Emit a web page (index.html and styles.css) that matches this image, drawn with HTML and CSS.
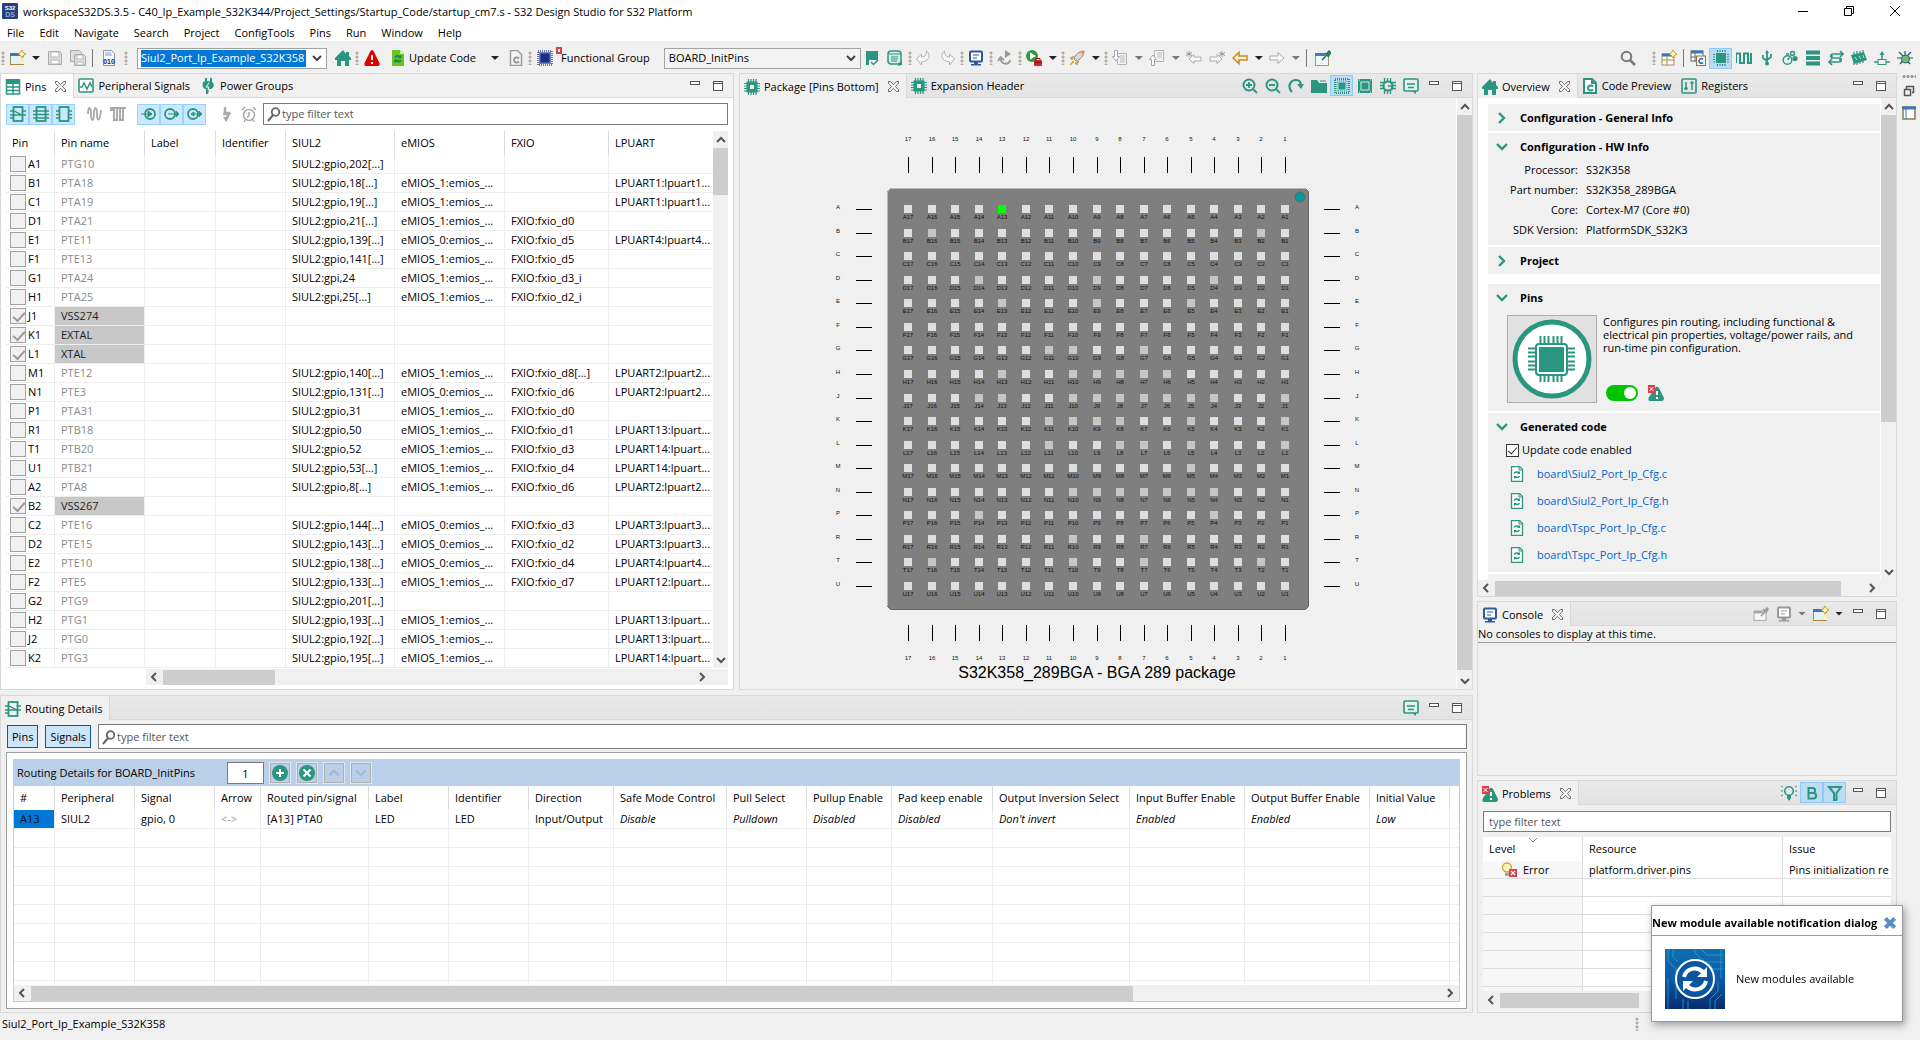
FILE: index.html
```html
<!DOCTYPE html>
<html lang="en">
<head>
  <meta charset="UTF-8">
  <title>S32 Design Studio for S32 Platform</title>
  <link rel="stylesheet" href="styles.css">
</head>
<body>
  <!-- Icons -->
  <svg class="sprite">
    <symbol id="home" viewBox="0 0 16 16"><path d="M8 0 0 8v2h2v6h4v-5h4v5h4v-6h2V8l-2-2V2h-3v2z" fill="#2b967f"/></symbol>
    <symbol id="newwin" viewBox="0 0 16 16"><rect x=".5" y="3.500" width="13" height="11" fill="#e4f3fc" stroke="#a58a3c"/><rect x="0" y="3" width="11" height="3" fill="#3b78b8"/><path d="M3 14c6 0 8-3 9-7l2 0v7z" fill="#fbeeb4"/><path d="M12 0l1.500 2.500L16 4l-2.500 1.500L12 8l-1.500-2.500L8 4l2.500-1.500z" fill="#fff3b0" stroke="#b98b12" stroke-width=".8"/></symbol>
    <symbol id="save" viewBox="0 0 16 16"><path d="M1.500 1.500h11l2 2v11h-13z" fill="#dedede" stroke="#a9a9a9"/><rect x="4" y="2" width="8" height="5" fill="#fff" stroke="#b5b5b5"/><rect x="4" y="10" width="8" height="4" fill="#fff" stroke="#b5b5b5"/></symbol>
    <symbol id="saveall" viewBox="0 0 16 16"><path d="M.5.5h9l2 2v9H.5z" fill="#dedede" stroke="#a9a9a9"/><path d="M4.500 4.500h9l2 2v9h-11z" fill="#dedede" stroke="#a9a9a9"/><rect x="7" y="5" width="6" height="4" fill="#fff" stroke="#b5b5b5"/><rect x="7" y="12" width="6" height="3" fill="#fff" stroke="#b5b5b5"/></symbol>
    <symbol id="warn" viewBox="0 0 16 16"><path d="M8 0c1 0 1.500 1 2 2l5.500 11c.5 1.500 0 3-1.500 3H2c-1.500 0-2-1.500-1.500-3L6 2c.5-1 1-2 2-2z" fill="#e00000"/><path d="M8 5v5M8 12v2" stroke="#fff" stroke-width="2"/></symbol>
    <symbol id="update" viewBox="0 0 16 16"><path d="M2 0h8l4 4v12H2z" fill="#6cc21e"/><path d="M10 0v4h4" fill="#cdebb0"/><path d="M5 7.500c1-2 4-2 6 0M11 10c-1 2-4 2-6 0" stroke="#0d8a55" stroke-width="2" fill="none"/><path d="M11 5v3H8M5 13v-3h3" stroke="#0d8a55" fill="none"/></symbol>
    <symbol id="cgray" viewBox="0 0 16 16"><path d="M2.500.5h7l4 4v11h-11z" fill="#f3f3f3" stroke="#9b9b9b" stroke-width="1.500"/><path d="M11 8.500c-2-2-5-1-5 1.500s3 3.500 5 1.500" stroke="#999" stroke-width="2" fill="none"/></symbol>
    <symbol id="cgreen" viewBox="0 0 16 16"><path d="M2 1h8l4 4v10H2z" fill="#fff" stroke="#2b967f" stroke-width="2"/><path d="M9 1v5h5z" fill="#2b967f"/><path d="M11 8.500c-2-2-5-1-5 1.500s3 3.500 5 1.500" stroke="#2b967f" stroke-width="2" fill="none"/></symbol>
    <symbol id="bluechip" viewBox="0 0 16 16"><rect x="1" y="1" width="14" height="14" fill="none" stroke="#6c78b4" stroke-width="2" stroke-dasharray="1 1"/><rect x="2" y="2" width="12" height="12" fill="#7380bd"/><rect x="3.500" y="3.500" width="9" height="9" fill="#1b2f86"/></symbol>
    <symbol id="chip" viewBox="0 0 16 16"><path d="M4.500 0v16M7 0v16M9.500 0v16M12 0v16M0 4.500h16M0 7h16M0 9.500h16M0 12h16" stroke="#2b967f" stroke-width="1.200"/><rect x="2.500" y="2.500" width="11" height="11" fill="#2b967f"/><rect x="6" y="6" width="4" height="4" fill="#e8f4f1"/></symbol>
    <symbol id="chipfull" viewBox="0 0 16 16"><path d="M4.500 0v16M7 0v16M9.500 0v16M12 0v16M0 4.500h16M0 7h16M0 9.500h16M0 12h16" stroke="#2b967f" stroke-width="1.200"/><rect x="2" y="2" width="12" height="12" fill="#bcd9ee"/><rect x="3" y="3" width="10" height="10" fill="#2b967f"/></symbol>
    <symbol id="flag" viewBox="0 0 16 16"><path d="M2 1h12v9H5v5H2z" fill="#2b967f"/><path d="M7 12l2.500 2.500L14 10" stroke="#2b967f" stroke-width="1.500" fill="none"/></symbol>
    <symbol id="dbedit" viewBox="0 0 16 16"><rect x="1" y="1" width="13" height="13" rx="3" fill="#d5ece6" stroke="#2b967f" stroke-width="1.500"/><path d="M2 4h11M4 7h7M4 9h7M4 11h6" stroke="#2b967f" stroke-width="1.200"/><path d="M10 16l5-5v4z" fill="#2b967f"/></symbol>
    <symbol id="undo" viewBox="0 0 16 16"><path d="M.5 9l5-5v3c4 0 5-3 5-6 4 3 4 10-5 11v3z" fill="#f8f8f8" stroke="#b0b0b0"/></symbol>
    <symbol id="monitor" viewBox="0 0 16 16"><rect x="2" y="1.500" width="12" height="10" rx="1" fill="#fff" stroke="#2d5a9e" stroke-width="2"/><path d="M5 5h6M5 8h4" stroke="#2d5a9e"/><path d="M6 12h4v2h3v1.500H3V14h3z" fill="#2d5a9e"/></symbol>
    <symbol id="monitorgray" viewBox="0 0 16 16"><rect x="2" y="1.500" width="12" height="10" rx="1" fill="#fff" stroke="#999" stroke-width="2"/><path d="M5 5h6M5 8h4" stroke="#999"/><path d="M6 12h4v2h3v1.500H3V14h3z" fill="#999"/></symbol>
    <symbol id="rerun" viewBox="0 0 16 16"><path d="M8 0l6 4-6 4z" fill="#8f9c91"/><path d="M4 9c-1 5 8 7 9 1M1 11l2.500-4L7 10" stroke="#999" stroke-width="1.800" fill="none"/></symbol>
    <symbol id="run" viewBox="0 0 16 16"><circle cx="6" cy="6" r="6" fill="#2f9a3c"/><path d="M4 2.500l6 3.500-6 3.500z" fill="#fff"/><rect x="8" y="10" width="8" height="6" rx="1" fill="#d3232a"/><path d="M10 10V8.500h4V10M8 12.500h8" stroke="#8c1217" fill="none"/></symbol>
    <symbol id="rocket" viewBox="0 0 16 16"><path d="M15 1c-5 0-9 4-10 8l2 2c4-1 8-5 8-10z" fill="#d8d8dc" stroke="#888"/><path d="M15 1l-4 1 3 3z" fill="#f0a030"/><path d="M5 6L1 8l2 2zM10 11l-2 4-2-2zM4 11l-3 4 4-3z" fill="#f0a030" stroke="#c57a18" stroke-width=".5"/></symbol>
    <symbol id="next" viewBox="0 0 16 16"><path d="M5.500 3.500h9v11h-9z" fill="#f4f4f4" stroke="#b4b4b4"/><path d="M8 6h5M8 8h5M8 10h5M8 12h5" stroke="#bbb"/><path d="M2.500.5h3v6h2L4 11 .5 6.500h2z" fill="#fff" stroke="#a4a4a4"/></symbol>
    <symbol id="prev" viewBox="0 0 16 16"><path d="M5.500.5h9v11h-9z" fill="#f4f4f4" stroke="#b4b4b4"/><path d="M8 3h5M8 5h5M8 7h5" stroke="#bbb"/><path d="M2.500 15.500h3v-6h2L4 5 .5 9.500h2z" fill="#fff" stroke="#a4a4a4"/></symbol>
    <symbol id="lastedit" viewBox="0 0 16 16"><path d="M3 9l5-4.500V7h7v4H8v2.500z" fill="#fafafa" stroke="#aaa"/><path d="M3 1v6M0 2.500l6 3M6 2.500l-6 3" stroke="#999"/></symbol>
    <symbol id="back" viewBox="0 0 16 16"><path d="M1 8l6-5.500V6h8v4H7v3.500z" fill="#fff3cf" stroke="#c68a1b" stroke-width="1.500"/></symbol>
    <symbol id="forward" viewBox="0 0 16 16"><path d="M15 8L9 2.500V6H1v4h8v3.500z" fill="#fafafa" stroke="#aaa"/></symbol>
    <symbol id="pinwin" viewBox="0 0 16 16"><rect x=".5" y="3.500" width="13" height="12" fill="#f1f8fc" stroke="#a99a55"/><path d="M0 4.500h10" stroke="#3f7fbe" stroke-width="3"/><path d="M7 10l4-4M10 3l4 4M11 5l3-4 2 2-3 3z" stroke="#22775a" stroke-width="1.500" fill="#2f9a6c"/></symbol>
    <symbol id="pingray" viewBox="0 0 16 16"><rect x="1" y="5.500" width="12" height="9" fill="#f6f6f6" stroke="#aaa"/><path d="M1 6h9" stroke="#aaa" stroke-width="3"/><path d="M8 10l4-4M10 3l4 4M12 5l2-3 1 1-2 3z" stroke="#999" stroke-width="1.500"/></symbol>
    <symbol id="search" viewBox="0 0 16 16"><circle cx="6.500" cy="6.500" r="4.800" fill="none" stroke="#777" stroke-width="2"/><path d="M10 10l5 5" stroke="#777" stroke-width="2.500"/></symbol>
    <symbol id="find" viewBox="0 0 16 16"><circle cx="9.500" cy="6" r="3.800" fill="none" stroke="#666" stroke-width="1.800"/><path d="M7 9l-5 6" stroke="#666" stroke-width="2"/></symbol>
    <symbol id="openpersp" viewBox="0 0 16 16"><rect x="1" y="4" width="12" height="11" fill="#fffbe9" stroke="#a58a5c"/><path d="M1 5h11" stroke="#3b78b8" stroke-width="3"/><path d="M1 10h12M6 6v9" stroke="#a58a5c"/><path d="M12 0l1.500 2.500L16 4l-2.500 1.500L12 8l-1.500-2.500L8 4l2.500-1.500z" fill="#fff3b0" stroke="#b98b12" stroke-width=".8"/></symbol>
    <symbol id="cpersp" viewBox="0 0 16 16"><rect x="1" y="1" width="12" height="10" fill="#fff" stroke="#666"/><path d="M1 2h12" stroke="#3b78b8" stroke-width="3"/><path d="M5 3v9M1 7h5" stroke="#666"/><rect x="6.500" y="6" width="9" height="9.500" fill="#eef5fc" stroke="#94713a"/><path d="M13 9c-2-1-4 0-4 2s2 3 4 1.500" stroke="#2e6cb0" stroke-width="1.600" fill="none"/></symbol>
    <symbol id="wave" viewBox="0 0 16 16"><path d="M0 13V3.500h4V13h4V3.500h4V13h3V3" stroke="#2b967f" stroke-width="2" fill="none"/></symbol>
    <symbol id="usb" viewBox="0 0 16 16"><path d="M8 2v11M4 5v3l4 3M12 4v3L8 10" stroke="#2b967f" stroke-width="1.800" fill="none"/><path d="M8 0l2 3H6z" fill="#2b967f"/><circle cx="8" cy="13.500" r="2" fill="#2b967f"/></symbol>
    <symbol id="clocks" viewBox="0 0 16 16"><circle cx="5.500" cy="10" r="4.300" fill="none" stroke="#2b967f" stroke-width="1.500"/><path d="M5.500 10l2-2.500M4 4h3" stroke="#2b967f" stroke-width="1.500"/><circle cx="10.500" cy="3.500" r="2" fill="none" stroke="#2b967f" stroke-width="1.500"/><circle cx="13" cy="8.500" r="2.600" fill="#2b967f"/></symbol>
    <symbol id="bars" viewBox="0 0 16 16"><path d="M1 2.500h14M1 8h14M1 13.500h14" stroke="#2b967f" stroke-width="4"/></symbol>
    <symbol id="swap" viewBox="0 0 16 16"><path d="M15 4H5c-3 0-3 4 0 4h6c3 0 3 4 0 4H1M12 1l3 3-3 3M4 15l-3-3 3-3M5 6H2M14 10h-3" stroke="#2b967f" stroke-width="1.600" fill="none"/></symbol>
    <symbol id="board" viewBox="0 0 16 16"><path d="M0 5l13-3 3 8-13 4z" fill="#2b967f"/><path d="M3 2v13M6 1v14M9 1v13M12 0v13" stroke="#2b967f" stroke-width="1.200"/><path d="M4 7l2 3M8 6l2 3M12 5l1 3" stroke="#bfe0d8"/></symbol>
    <symbol id="resistor" viewBox="0 0 16 16"><path d="M0 12h16M8 11V3" stroke="#2b967f" stroke-width="1.500"/><path d="M8 1l2.500 4h-5z" fill="#2b967f"/><rect x="4" y="9.500" width="8" height="5" fill="#f0f0f0" stroke="#2b967f"/></symbol>
    <symbol id="bug" viewBox="0 0 16 16"><path d="M8 8L2 2M8 8l6-6M8 8H0M8 8h8M8 8l-5 6M8 8l5 6M8 8V1" stroke="#245d59" stroke-width="1.200"/><circle cx="8.500" cy="9" r="4" fill="#7cb877" stroke="#236a73"/></symbol>
    <symbol id="tablei" viewBox="0 0 16 16"><path d="M1.500 1h13v14h-13zM1.500 8h13M1.500 11.500h13M8 4v11" stroke="#2b967f" stroke-width="1.500" fill="none"/><path d="M1 0h14v5H1z" fill="#2b967f"/></symbol>
    <symbol id="signal" viewBox="0 0 16 16"><rect x="1" y="1" width="14" height="13" rx="1" fill="#fff" stroke="#2b967f" stroke-width="1.600"/><path d="M2 9h2l2-4 3 6 3-6 2 4" stroke="#2b967f" stroke-width="1.500" fill="none"/></symbol>
    <symbol id="plug" viewBox="0 0 16 16"><path d="M3 4l4-1 5 1c3 2 2 6-1 7l-2 0-1 5H6v-5C3 11 2 8 3 4z" fill="#2b967f"/><path d="M6 5V0M11 5V0" stroke="#2b967f" stroke-width="2"/><path d="M9 5L6 9h3l-1 3" stroke="#fff" fill="none"/></symbol>
    <symbol id="close" viewBox="0 0 12 12"><path d="M.5.5h2L6 4l3.500-3.500h2v2L8 6l3.500 3.500v2h-2L6 8l-3.500 3.500h-2v-2L4 6 .5 2.500z" fill="#fff" stroke="#555"/></symbol>
    <symbol id="mini" viewBox="0 0 16 16"><rect x="3.500" y="3.500" width="9" height="3" fill="#fff" stroke="#555"/></symbol>
    <symbol id="maxi" viewBox="0 0 16 16"><rect x="3.500" y="3.500" width="9" height="9" fill="#fff" stroke="#555"/><path d="M3 5.500h10" stroke="#555"/></symbol>
    <symbol id="route" viewBox="0 0 16 16"><rect x="3.500" y="1" width="9" height="14" fill="none" stroke="#2b967f" stroke-width="1.800"/><path d="M0 5h4l8 4h4M0 9h16M0 12h4M12 5h4" stroke="#2b967f" stroke-width="1.300" fill="none"/></symbol>
    <symbol id="routeh" viewBox="0 0 16 16"><rect x="3.500" y="1" width="9" height="14" fill="none" stroke="#2b967f" stroke-width="1.800"/><path d="M0 5h16M0 8.500h16M0 12h16" stroke="#2b967f" stroke-width="1.300"/></symbol>
    <symbol id="routen" viewBox="0 0 16 16"><rect x="3.500" y="1" width="9" height="14" fill="none" stroke="#2b967f" stroke-width="1.800"/><path d="M0 5h3M0 8.500h3M0 12h3M13 5h3M13 8.500h3M13 12h3" stroke="#2b967f" stroke-width="1.500"/></symbol>
    <symbol id="sine" viewBox="0 0 16 16"><path d="M1 8C1 0 4 0 4 8s3 8 3 0 3-8 3 0 3 8 4-4" stroke="#aaa" stroke-width="1.800" fill="none"/></symbol>
    <symbol id="square" viewBox="0 0 16 16"><path d="M0 2h4v12h3V2h3v12h3V2h3M0 4h3M5 2h2M10 2h3" stroke="#aaa" stroke-width="2" fill="none"/></symbol>
    <symbol id="inp" viewBox="0 0 16 16"><circle cx="9" cy="8" r="5" fill="none" stroke="#2b967f" stroke-width="1.800"/><path d="M0 8h9M7 5l4 3-4 3z" stroke="#2b967f" fill="#2b967f"/></symbol>
    <symbol id="outp" viewBox="0 0 16 16"><circle cx="6" cy="8" r="5" fill="none" stroke="#2b967f" stroke-width="1.800"/><path d="M4 8h9M12 5l3 3-3 3z" stroke="#2b967f" fill="#2b967f"/></symbol>
    <symbol id="inout" viewBox="0 0 16 16"><circle cx="6" cy="8" r="5" fill="none" stroke="#2b967f" stroke-width="1.800"/><path d="M4 8h9M12 5l3 3-3 3zM7 6L4 8l3 2z" stroke="#2b967f" fill="#2b967f"/></symbol>
    <symbol id="bolt" viewBox="0 0 16 16"><path d="M7 1v6h5M5 8h6l-3 5" stroke="#aaa" stroke-width="2.500" fill="none"/><path d="M5 11l3 5 3-5z" fill="#aaa"/></symbol>
    <symbol id="alarm" viewBox="0 0 16 16"><circle cx="8" cy="9" r="5.500" fill="none" stroke="#aaa" stroke-width="1.500"/><path d="M8 6v3.500l-2 2M1 4l3-3M15 4l-3-3M4 14l-1 2M12 14l1 2" stroke="#aaa" stroke-width="1.500" fill="none"/></symbol>
    <symbol id="zoomin" viewBox="0 0 16 16"><circle cx="7" cy="7" r="5.500" fill="none" stroke="#2b967f" stroke-width="2"/><path d="M4 7h6M7 4v6M11 11l4 4" stroke="#2b967f" stroke-width="1.800"/></symbol>
    <symbol id="zoomout" viewBox="0 0 16 16"><circle cx="7" cy="7" r="5.500" fill="none" stroke="#2b967f" stroke-width="2"/><path d="M4 7h6M11 11l4 4" stroke="#2b967f" stroke-width="1.800"/></symbol>
    <symbol id="rotate" viewBox="0 0 16 16"><path d="M4 14C-1 9 2 2 8 2c4 0 5 3 5 6" stroke="#2b967f" stroke-width="2.200" fill="none"/><path d="M9 6h7l-3 5z" fill="#2b967f"/></symbol>
    <symbol id="folder" viewBox="0 0 16 16"><path d="M0 2h6l2 3h8v10H0z" fill="#2b967f"/><path d="M9 3h6" stroke="#2b967f"/></symbol>
    <symbol id="pkg" viewBox="0 0 16 16"><rect x="1" y="1" width="14" height="14" fill="none" stroke="#2b967f" stroke-width="2" stroke-dasharray="1 1"/><rect x="3" y="3" width="10" height="10" fill="none" stroke="#2b967f" stroke-dasharray="1 1"/><rect x="4.500" y="4.500" width="7" height="7" fill="#2b967f"/></symbol>
    <symbol id="pkg2" viewBox="0 0 16 16"><rect x="1" y="1" width="14" height="14" fill="#2b967f"/><rect x="4" y="4" width="8" height="8" fill="#2b967f" stroke="#d9e9e5"/><path d="M2 2h1M13 2h1M2 14h1M13 14h1" stroke="#fff"/></symbol>
    <symbol id="gchip" viewBox="0 0 16 16"><path d="M4.500 0v16M7.500 0v16M10.500 0v16M0 4.500h16M0 7.500h16M0 10.500h16" stroke="#2b967f" stroke-width="1.300"/><circle cx="8" cy="8" r="4.500" fill="#e6e6e6" stroke="#2b967f" stroke-width="2"/><path d="M8 8h4v4" stroke="#2b967f" stroke-width="1.500" fill="none"/></symbol>
    <symbol id="note" viewBox="0 0 16 16"><rect x="1" y="1" width="14" height="12" rx="1" fill="#e3f1ee" stroke="#2b967f" stroke-width="1.600"/><path d="M4 6h8M5 9.500h6" stroke="#2b967f" stroke-width="1.600"/><path d="M9 13h4v3z" fill="#2b967f"/></symbol>
    <symbol id="registers" viewBox="0 0 16 16"><rect x="1" y="1" width="14" height="14" rx="1" fill="none" stroke="#2b967f" stroke-width="1.600"/><path d="M5 4v5M11 7v5" stroke="#2b967f" stroke-width="1.500"/><circle cx="5" cy="10.500" r="1.700" fill="#2b967f"/><circle cx="11" cy="5" r="1.700" fill="#2b967f"/></symbol>
    <symbol id="problem" viewBox="0 0 16 16"><path d="M8 2c2-1 3 1 4 3l4 8c0 2-1 3-2 3H2c-2 0-2-2-1-4z" fill="#2b967f"/><path d="M9 6v4M9 12v2" stroke="#fff" stroke-width="2"/><rect width="7" height="8" fill="#d9404c"/><path d="M1.500 2l4 4M5.500 2l-4 4" stroke="#fff"/></symbol>
    <symbol id="bulb" viewBox="0 0 16 16"><circle cx="8" cy="6" r="4.300" fill="none" stroke="#2b967f" stroke-width="1.600"/><path d="M6 10h4v3l-2 3-2-3z" fill="#2b967f"/><path d="M0 1l2 1M0 6h2M0 11l2-1M16 1l-2 1M16 6h-2M16 11l-2-1" stroke="#2b967f"/></symbol>
    <symbol id="bold" viewBox="0 0 16 16"><path d="M4.500 3h4c3.500 0 3.500 5 0 5h-4zM4.500 8h5c3.500 0 3.500 5.500 0 5.500h-5z" fill="none" stroke="#2b967f" stroke-width="2"/></symbol>
    <symbol id="funnel" viewBox="0 0 16 16"><path d="M2 2h12L9.500 8v7H7V8z" fill="none" stroke="#2b967f" stroke-width="2"/></symbol>
    <symbol id="errbulb" viewBox="0 0 16 16"><circle cx="6" cy="5.500" r="4.500" fill="#fff3c4" stroke="#e0a030" stroke-width="1.300"/><path d="M4 11h4v3H4z" fill="#9aa6b8"/><rect x="8" y="7" width="8" height="8" fill="#d9404c"/><path d="M10 9l4 4M14 9l-4 4" stroke="#fff" stroke-width="1.200"/></symbol>
    <symbol id="genfile" viewBox="0 0 16 16"><path d="M2.500.5h8l3 3v12h-11z" fill="#fff" stroke="#2b967f" stroke-width="1.300"/><path d="M10 0v4h4" fill="none" stroke="#2b967f"/><path d="M5 7.500c1-2 4-2 5.500-.5M10.500 10c-1 2-4 2-5.500.5" stroke="#2b967f" stroke-width="1.500" fill="none"/><path d="M11 5v3H8zM5 13v-3h3z" fill="#2b967f"/></symbol>
    <symbol id="chevr" viewBox="0 0 12 12"><path d="M3 1l5 5-5 5" stroke="#2b967f" stroke-width="2.400" fill="none"/></symbol>
    <symbol id="chevd" viewBox="0 0 12 12"><path d="M1 3l5 5 5-5" stroke="#2b967f" stroke-width="2.400" fill="none"/></symbol>
    <symbol id="up" viewBox="0 0 12 12"><path d="M2 8l4-4 4 4" stroke="currentColor" stroke-width="2" fill="none"/></symbol>
    <symbol id="down" viewBox="0 0 12 12"><path d="M2 4l4 4 4-4" stroke="currentColor" stroke-width="2" fill="none"/></symbol>
    <symbol id="left" viewBox="0 0 12 12"><path d="M8 2L4 6l4 4" stroke="currentColor" stroke-width="2" fill="none"/></symbol>
    <symbol id="right" viewBox="0 0 12 12"><path d="M4 2l4 4-4 4" stroke="currentColor" stroke-width="2" fill="none"/></symbol>
    <symbol id="add" viewBox="0 0 18 18"><circle cx="9" cy="9" r="8" fill="#2b967f"/><path d="M9 5v8M5 9h8" stroke="#fff" stroke-width="2"/></symbol>
    <symbol id="del" viewBox="0 0 18 18"><circle cx="9" cy="9" r="8" fill="#2b967f"/><path d="M5.500 5.500l7 7M12.500 5.500l-7 7" stroke="#fff" stroke-width="2"/></symbol>
    <symbol id="restore" viewBox="0 0 16 16"><path d="M5.500 6V3.500h7v6H11M3.500 6.500h6v6h-6z" fill="none" stroke="#555" stroke-width="1.500"/></symbol>
    <symbol id="layout" viewBox="0 0 16 16"><rect x="2" y="2" width="12" height="12" fill="#fff" stroke="#8c7a4c" stroke-width="1.500"/><path d="M1 3h14" stroke="#3b78b8" stroke-width="3"/><path d="M5 4v10" stroke="#3b78b8"/></symbol>
  </svg>

  <header>
    <div class="titlebar">
      <svg class="i logo" viewBox="0 0 16 16"><rect width="16" height="16" rx="1" fill="#24407c"/><text x="8" y="7" font-size="6" text-anchor="middle" fill="#fff">S32</text><text x="8" y="14" font-size="7" text-anchor="middle" fill="#8fa6d8">DS</text></svg>
      <span class="title">workspaceS32DS.3.5 - C40_Ip_Example_S32K344/Project_Settings/Startup_Code/startup_cm7.s - S32 Design Studio for S32 Platform</span>
      <button class="win" aria-label="Minimize"><svg class="i"><path d="M3 8.500h10" stroke="#000"/></svg></button>
      <button class="win" aria-label="Restore"><svg class="i"><path d="M5.500 5.500v-2h7v7h-2M3.500 5.500h7v7h-7z" stroke="#000" fill="none"/></svg></button>
      <button class="win" aria-label="Close"><svg class="i"><path d="M3 3l10 10M13 3L3 13" stroke="#000"/></svg></button>
    </div>
    <nav class="menubar">
      <a href="#">File</a><a href="#">Edit</a><a href="#">Navigate</a><a href="#">Search</a><a href="#">Project</a><a href="#">ConfigTools</a><a href="#">Pins</a><a href="#">Run</a><a href="#">Window</a><a href="#">Help</a>
    </nav>
    <div class="toolbar">
      <i class="dots"></i>
      <button class="tool" aria-label="New"><svg class="i"><use href="#newwin"/></svg></button><i class="caret"></i>
      <button class="tool" aria-label="Save"><svg class="i"><use href="#save"/></svg></button>
      <button class="tool" aria-label="Save all"><svg class="i"><use href="#saveall"/></svg></button>
      <i class="sep"></i>
      <button class="tool wide" aria-label="Build"><svg class="i logo" viewBox="0 0 16 16"><path d="M2.500.5h8l3 3v12h-11z" fill="#f4f9ff" stroke="#8b94a8"/><path d="M4 3h6M4 5h7" stroke="#7ca0d0"/><text x="8" y="14" font-size="7" text-anchor="middle" fill="#222b66">010</text></svg></button>
      <i class="dots"></i>
      <span class="combo project"><select aria-label="Project"><option>Siul2_Port_Ip_Example_S32K358</option></select><svg><use href="#down"/></svg></span>
      <button class="tool" aria-label="Home"><svg class="i"><use href="#home"/></svg></button>
      <i class="dots"></i>
      <button class="tool" aria-label="Problems"><svg class="i"><use href="#warn"/></svg></button>
      <button class="tool text"><svg class="i"><use href="#update"/></svg>Update Code</button><i class="caret wide"></i>
      <button class="tool" aria-label="Preview"><svg class="i"><use href="#cgray"/></svg></button>
      <i class="dots"></i>
      <button class="tool" aria-label="Processor"><svg class="i"><use href="#bluechip"/></svg></button>
      <label class="group" for="fgroup"><i class="errmark"></i>Functional Group</label>
      <span class="combo init"><select id="fgroup"><option>BOARD_InitPins</option></select><svg><use href="#down"/></svg></span>
      <button class="tool" aria-label="Flag"><svg class="i"><use href="#flag"/></svg></button>
      <button class="tool" aria-label="Group properties"><svg class="i"><use href="#dbedit"/></svg></button>
      <i class="dots"></i>
      <button class="tool" aria-label="Undo"><svg class="i"><use href="#undo"/></svg></button>
      <button class="tool" aria-label="Redo"><svg class="i flip"><use href="#undo"/></svg></button>
      <i class="dots"></i>
      <button class="tool" aria-label="Console"><svg class="i"><use href="#monitor"/></svg></button>
      <i class="dots"></i>
      <button class="tool" aria-label="Rerun"><svg class="i"><use href="#rerun"/></svg></button>
      <i class="dots"></i>
      <button class="tool" aria-label="Run"><svg class="i"><use href="#run"/></svg></button><i class="caret"></i>
      <i class="dots"></i>
      <button class="tool" aria-label="Launch"><svg class="i"><use href="#rocket"/></svg></button><i class="caret"></i>
      <i class="dots"></i>
      <button class="tool" aria-label="Next"><svg class="i"><use href="#next"/></svg></button><i class="caret dim"></i>
      <button class="tool" aria-label="Previous"><svg class="i"><use href="#prev"/></svg></button><i class="caret dim"></i>
      <button class="tool" aria-label="Last edit"><svg class="i"><use href="#lastedit"/></svg></button>
      <button class="tool" aria-label="Next edit"><svg class="i flip"><use href="#lastedit"/></svg></button>
      <button class="tool" aria-label="Back"><svg class="i"><use href="#back"/></svg></button><i class="caret"></i>
      <button class="tool" aria-label="Forward"><svg class="i"><use href="#forward"/></svg></button><i class="caret dim"></i>
      <i class="sep"></i>
      <button class="tool wide" aria-label="Pin editor"><svg class="i"><use href="#pinwin"/></svg></button>
      <div class="perspectives">
        <button class="tool search" aria-label="Search"><svg class="i"><use href="#search"/></svg></button>
        <i class="dots"></i>
        <button class="tool" aria-label="Open perspective"><svg class="i"><use href="#openpersp"/></svg></button>
        <i class="sep"></i>
        <button class="tool" aria-label="C/C++"><svg class="i"><use href="#cpersp"/></svg></button>
        <button class="tool on" aria-label="Pins"><svg class="i"><use href="#chipfull"/></svg></button>
        <button class="tool" aria-label="Clocks"><svg class="i"><use href="#wave"/></svg></button>
        <button class="tool" aria-label="Peripherals"><svg class="i"><use href="#usb"/></svg></button>
        <button class="tool" aria-label="Timers"><svg class="i"><use href="#clocks"/></svg></button>
        <button class="tool" aria-label="Memory"><svg class="i"><use href="#bars"/></svg></button>
        <button class="tool" aria-label="DCD"><svg class="i"><use href="#swap"/></svg></button>
        <button class="tool" aria-label="IVT"><svg class="i"><use href="#board"/></svg></button>
        <button class="tool" aria-label="QuadSPI"><svg class="i"><use href="#resistor"/></svg></button>
        <button class="tool" aria-label="Debug"><svg class="i"><use href="#bug"/></svg></button>
      </div>
    </div>
  </header>

  <main>
    <div class="left">
      <div class="top">
        <section class="panel pins">
          <div class="tabs">
            <button class="tab active white"><svg class="i"><use href="#tablei"/></svg>Pins<svg class="x"><use href="#close"/></svg></button>
            <button class="tab"><svg class="i"><use href="#signal"/></svg>Peripheral Signals</button>
            <button class="tab"><svg class="i"><use href="#plug"/></svg>Power Groups</button>
            <div class="tabtools">
              <button class="tool" aria-label="Minimize"><svg class="i"><use href="#mini"/></svg></button>
              <button class="tool" aria-label="Maximize"><svg class="i"><use href="#maxi"/></svg></button>
            </div>
          </div>
          <div class="pintools">
            <button class="tool on" aria-label="Routed"><svg class="i"><use href="#route"/></svg></button>
            <button class="tool on" aria-label="All pins"><svg class="i"><use href="#routeh"/></svg></button>
            <button class="tool on" aria-label="Unrouted"><svg class="i"><use href="#routen"/></svg></button>
            <button class="tool after" aria-label="Analog"><svg class="i"><use href="#sine"/></svg></button>
            <button class="tool" aria-label="Digital"><svg class="i"><use href="#square"/></svg></button>
            <button class="tool on after" aria-label="Input"><svg class="i"><use href="#inp"/></svg></button>
            <button class="tool on" aria-label="Output"><svg class="i"><use href="#outp"/></svg></button>
            <button class="tool on" aria-label="Input and output"><svg class="i"><use href="#inout"/></svg></button>
            <button class="tool after" aria-label="Power"><svg class="i"><use href="#bolt"/></svg></button>
            <button class="tool" aria-label="Clock"><svg class="i"><use href="#alarm"/></svg></button>
            <label class="filter"><svg class="i"><use href="#find"/></svg><input type="text" placeholder="type filter text" aria-label="Filter pins"></label>
          </div>
          <div class="pinsview">
            <table class="grid pintable">
              <colgroup><col class="c49"><col class="c90"><col class="c71"><col class="c70"><col class="c109"><col class="c110"><col class="c104"><col></colgroup>
              <thead><tr><th>Pin</th><th>Pin name</th><th>Label</th><th>Identifier</th><th>SIUL2</th><th>eMIOS</th><th>FXIO</th><th>LPUART</th></tr></thead>
              <tbody id="pinrows"></tbody>
            </table>
            <div class="vscroll"><svg><use href="#up"/></svg><div class="thumb t47"></div><svg class="end"><use href="#down"/></svg></div>
          </div>
          <div class="hscroll inset"><svg><use href="#left"/></svg><div class="thumb w112"></div><svg class="end"><use href="#right"/></svg></div>
        </section>

        <section class="panel package">
          <div class="tabs">
            <button class="tab active"><svg class="i"><use href="#chip"/></svg>Package [Pins Bottom]<svg class="x"><use href="#close"/></svg></button>
            <button class="tab"><svg class="i"><use href="#chip"/></svg>Expansion Header</button>
            <div class="tabtools">
              <button class="tool" aria-label="Zoom in"><svg class="i"><use href="#zoomin"/></svg></button>
              <button class="tool" aria-label="Zoom out"><svg class="i"><use href="#zoomout"/></svg></button>
              <button class="tool" aria-label="Rotate"><svg class="i"><use href="#rotate"/></svg></button>
              <button class="tool" aria-label="Resources"><svg class="i"><use href="#folder"/></svg></button>
              <button class="tool on" aria-label="Bottom view"><svg class="i"><use href="#pkg"/></svg></button>
              <button class="tool" aria-label="Top view"><svg class="i"><use href="#pkg2"/></svg></button>
              <button class="tool" aria-label="Custom view"><svg class="i"><use href="#gchip"/></svg></button>
              <button class="tool" aria-label="Legend"><svg class="i"><use href="#note"/></svg></button>
              <button class="tool" aria-label="Minimize"><svg class="i"><use href="#mini"/></svg></button>
              <button class="tool" aria-label="Maximize"><svg class="i"><use href="#maxi"/></svg></button>
            </div>
          </div>
          <div class="canvas">
            <svg id="chipview" viewBox="0 -1 716 590" width="716" height="590"></svg>
            <div class="vscroll"><svg><use href="#up"/></svg><div class="thumb grow"></div><svg class="end"><use href="#down"/></svg></div>
          </div>
        </section>
      </div>

      <section class="panel routing">
        <div class="tabs">
          <button class="tab active"><svg class="i"><use href="#route"/></svg>Routing Details</button>
          <div class="tabtools">
            <button class="tool" aria-label="Legend"><svg class="i"><use href="#note"/></svg></button>
            <button class="tool" aria-label="Minimize"><svg class="i"><use href="#mini"/></svg></button>
            <button class="tool" aria-label="Maximize"><svg class="i"><use href="#maxi"/></svg></button>
          </div>
        </div>
        <div class="routetools">
          <button class="toggle">Pins</button>
          <button class="toggle">Signals</button>
          <label class="filter"><svg class="i"><use href="#find"/></svg><input type="text" placeholder="type filter text" aria-label="Filter routes"></label>
        </div>
        <div class="routebox">
          <div class="routeframe">
            <div class="routehead">
              <label for="count">Routing Details for BOARD_InitPins</label>
              <input id="count" type="text" value="1">
              <button aria-label="Add"><svg><use href="#add"/></svg></button>
              <button aria-label="Remove"><svg><use href="#del"/></svg></button>
              <button aria-label="Move up" disabled><svg><use href="#up"/></svg></button>
              <button aria-label="Move down" disabled><svg><use href="#down"/></svg></button>
            </div>
            <div class="routeclip">
              <table class="grid routetable">
                <colgroup><col class="c41"><col class="c80"><col class="c80"><col class="c46"><col class="c108"><col class="c80"><col class="c80"><col class="c85"><col class="c113"><col class="c80"><col class="c85"><col class="c101"><col class="c137"><col class="c115"><col class="c125"><col class="c80"><col></colgroup>
                <thead><tr><th>#</th><th>Peripheral</th><th>Signal</th><th>Arrow</th><th>Routed pin/signal</th><th>Label</th><th>Identifier</th><th>Direction</th><th>Safe Mode Control</th><th>Pull Select</th><th>Pullup Enable</th><th>Pad keep enable</th><th>Output Inversion Select</th><th>Input Buffer Enable</th><th>Output Buffer Enable</th><th>Initial Value</th><th></th></tr></thead>
                <tbody id="routerows">
                  <tr><td class="sel">A13</td><td>SIUL2</td><td>gpio, 0</td><td class="dim">&lt;-&gt;</td><td>[A13] PTA0</td><td>LED</td><td>LED</td><td>Input/Output</td><td><em>Disable</em></td><td><em>Pulldown</em></td><td><em>Disabled</em></td><td><em>Disabled</em></td><td><em>Don't invert</em></td><td><em>Enabled</em></td><td><em>Enabled</em></td><td><em>Low</em></td><td></td></tr>
                </tbody>
              </table>
            </div>
            <div class="hscroll"><svg><use href="#left"/></svg><div class="thumb w1102"></div><svg class="end"><use href="#right"/></svg></div>
          </div>
        </div>
      </section>
    </div>

    <div class="right">
      <section class="panel overview">
        <div class="tabs">
          <button class="tab active"><svg class="i"><use href="#home"/></svg>Overview<svg class="x"><use href="#close"/></svg></button>
          <button class="tab"><svg class="i"><use href="#cgreen"/></svg>Code Preview</button>
          <button class="tab"><svg class="i"><use href="#registers"/></svg>Registers</button>
          <div class="tabtools">
            <button class="tool" aria-label="Minimize"><svg class="i"><use href="#mini"/></svg></button>
            <button class="tool" aria-label="Maximize"><svg class="i"><use href="#maxi"/></svg></button>
          </div>
        </div>
        <div class="ovbody">
          <div class="cards">
            <div class="card"><h3><svg><use href="#chevr"/></svg>Configuration - General Info</h3></div>
            <div class="card hw">
              <h3><svg><use href="#chevd"/></svg>Configuration - HW Info</h3>
              <dl><dt>Processor:</dt><dd>S32K358</dd><dt>Part number:</dt><dd>S32K358_289BGA</dd><dt>Core:</dt><dd>Cortex-M7 (Core #0)</dd><dt>SDK Version:</dt><dd>PlatformSDK_S32K3</dd></dl>
            </div>
            <div class="card"><h3><svg><use href="#chevr"/></svg>Project</h3></div>
            <div class="card spaced">
              <h3><svg><use href="#chevd"/></svg>Pins</h3>
              <div class="pinsinfo">
                <button class="bigicon" aria-label="Pins tool">
                  <svg viewBox="0 0 80 80">
                    <circle cx="40" cy="40" r="37" fill="#fff" stroke="#2b967f" stroke-width="5"/>
                    <path d="M28.500 17v46M32.500 17v46M36.500 17v46M41.500 17v46M45.500 17v46M49.500 17v46M16 29.500h47M16 33.500h47M16 37.500h47M16 42.500h47M16 46.500h47M16 50.500h47" stroke="#2b967f" stroke-width="2"/>
                    <rect x="24" y="25" width="31" height="31" rx="3" fill="#fff" stroke="#2b967f" stroke-width="2"/>
                    <rect x="27" y="28" width="25" height="25" fill="#2b967f"/>
                  </svg>
                </button>
                <div>
                  <p>Configures pin routing, including functional &amp; electrical pin properties, voltage/power rails, and run-time pin configuration.</p>
                  <div class="status"><input class="switch" type="checkbox" checked aria-label="Enable pins tool"><svg class="i"><use href="#problem"/></svg></div>
                </div>
              </div>
            </div>
            <div class="card gen">
              <h3><svg><use href="#chevd"/></svg>Generated code</h3>
              <label class="check"><input type="checkbox" checked>Update code enabled</label>
              <a href="#"><svg class="i"><use href="#genfile"/></svg>board\Siul2_Port_Ip_Cfg.c</a>
              <a href="#"><svg class="i"><use href="#genfile"/></svg>board\Siul2_Port_Ip_Cfg.h</a>
              <a href="#"><svg class="i"><use href="#genfile"/></svg>board\Tspc_Port_Ip_Cfg.c</a>
              <a href="#"><svg class="i"><use href="#genfile"/></svg>board\Tspc_Port_Ip_Cfg.h</a>
            </div>
            <div class="card rest"></div>
          </div>
          <div class="vscroll"><svg><use href="#up"/></svg><div class="thumb t307"></div><svg class="end"><use href="#down"/></svg></div>
        </div>
        <div class="hscroll corner"><svg><use href="#left"/></svg><div class="thumb w346"></div><svg class="end"><use href="#right"/></svg></div>
      </section>

      <section class="panel console">
        <div class="tabs">
          <button class="tab active"><svg class="i"><use href="#monitor"/></svg>Console<svg class="x"><use href="#close"/></svg></button>
          <div class="tabtools">
            <button class="tool" aria-label="Pin console"><svg class="i"><use href="#pingray"/></svg></button>
            <button class="tool" aria-label="Display console"><svg class="i"><use href="#monitorgray"/></svg></button><i class="caret dim"></i>
            <button class="tool" aria-label="Open console"><svg class="i"><use href="#newwin"/></svg></button><i class="caret"></i>
            <button class="tool" aria-label="Minimize"><svg class="i"><use href="#mini"/></svg></button>
            <button class="tool" aria-label="Maximize"><svg class="i"><use href="#maxi"/></svg></button>
          </div>
        </div>
        <p>No consoles to display at this time.</p>
      </section>

      <section class="panel problems">
        <div class="tabs">
          <button class="tab active"><svg class="i"><use href="#problem"/></svg>Problems<svg class="x"><use href="#close"/></svg></button>
          <div class="tabtools">
            <button class="tool" aria-label="Hints"><svg class="i"><use href="#bulb"/></svg></button>
            <button class="tool on" aria-label="Bold"><svg class="i"><use href="#bold"/></svg></button>
            <button class="tool on" aria-label="Filter"><svg class="i"><use href="#funnel"/></svg></button>
            <button class="tool" aria-label="Minimize"><svg class="i"><use href="#mini"/></svg></button>
            <button class="tool" aria-label="Maximize"><svg class="i"><use href="#maxi"/></svg></button>
          </div>
        </div>
        <input class="pfilter" type="text" placeholder="type filter text" aria-label="Filter problems">
        <div class="probview">
          <table class="grid probtable">
            <colgroup><col class="c100"><col class="c200"><col></colgroup>
            <thead><tr><th><svg class="sort"><path d="M0 0l4 4 4-4" fill="none" stroke="#888"/></svg>Level</th><th>Resource</th><th>Issue</th></tr></thead>
            <tbody id="problemrows">
              <tr><td><span class="err"><svg class="i"><use href="#errbulb"/></svg>Error</span></td><td>platform.driver.pins</td><td>Pins initialization re</td></tr>
            </tbody>
          </table>
        </div>
        <div class="hscroll"><svg><use href="#left"/></svg><div class="thumb w139"></div><svg class="end"><use href="#right"/></svg></div>
      </section>
    </div>

    <aside class="strip">
      <i class="hdots"></i>
      <button class="tool" aria-label="Restore view"><svg class="i"><use href="#restore"/></svg></button>
      <button class="tool" aria-label="Outline"><svg class="i"><use href="#layout"/></svg></button>
    </aside>
  </main>

  <footer><span>Siul2_Port_Ip_Example_S32K358</span><i class="dots"></i></footer>

  <div class="popup" role="dialog" aria-label="New module available">
    <div class="popuphead"><b>New module available notification dialog</b><button aria-label="Close"><svg viewBox="0 0 12 12"><path d="M2 2l8 8M10 2l-8 8" stroke="#5b8cc4" stroke-width="3.500"/></svg></button></div>
    <div class="popupbody">
      <svg viewBox="0 0 60 60">
        <defs><linearGradient id="sky" x1="0" y1="0" x2="0" y2="1"><stop offset="0" stop-color="#0f6fae"/><stop offset=".5" stop-color="#0a5aa8"/><stop offset="1" stop-color="#062c6e"/></linearGradient></defs>
        <rect width="60" height="60" fill="url(#sky)"/>
        <path d="M3 0v12l8 8v30M8 0v8l5 5M30 0v4l10 9h18M36 0l6 6h16M58 20H48l-5-6M45 60V50l8-8v-9M50 60v-8l7-7M18 60V50M23 60v-8M3 60V30M56 0v30" stroke="#2e9ad6" stroke-width=".8" fill="none"/>
        <circle cx="30" cy="30" r="19" fill="#0a55a0" stroke="#fff" stroke-width="2"/>
        <path d="M19 28c2-9 13-11 19-5M41 32c-2 9-13 11-19 5" stroke="#fff" stroke-width="4" fill="none"/>
        <path d="M42 18v10H32zM18 42V32h10z" fill="#fff"/>
      </svg>
      <span>New modules available</span>
    </div>
  </div>

  <script src="script.js"></script>
</body>
</html>
```
FILE: styles.css
```css
* {
  box-sizing: border-box;
}

body {
  margin: 0;
  min-height: 100vh;
  display: flex;
  flex-direction: column;
  background: #f0f0f0;
  color: #000;
  font-family: "Open Sans", "Noto Sans", sans-serif;
  font-size: 11px;
  line-height: 16px;
  overflow: hidden;
}

button, input, select {
  font: inherit;
  color: inherit;
  margin: 0;
}

button {
  border: 0;
  background: none;
  padding: 0;
}

p, h3, dl, dd {
  margin: 0;
}

svg {
  flex: none;
  display: block;
}

.sprite {
  position: absolute;
  width: 0;
  height: 0;
}

.logo {
  font-family: "Liberation Sans", sans-serif;
  font-weight: bold;
  overflow: visible;
}

.i {
  width: 16px;
  height: 16px;
}

.flip {
  transform: scaleX(-1);
}

/* Title and menu */
.titlebar {
  display: flex;
  align-items: center;
  height: 22px;
  padding: 0 2px 0 2px;
  background: #fff;
}

.title {
  flex: 1;
  margin-left: 5px;
  padding-top: 2px;
  white-space: nowrap;
}

.win {
  width: 46px;
  display: flex;
  justify-content: center;
}

.menubar {
  display: flex;
  gap: 15px;
  height: 19px;
  padding-left: 7px;
  background: #fff;
  line-height: 22px;
}

.menubar a {
  color: #000;
  text-decoration: none;
}

/* Toolbar */
.toolbar {
  display: flex;
  align-items: center;
  height: 32px;
  padding-top: 2px;
}

.tool {
  flex: none;
  width: 23px;
  height: 21px;
  display: flex;
  align-items: center;
  justify-content: center;
}

.tool.wide {
  width: 28px;
}

.tool.on {
  background: #cce8ff;
  border: 1px solid #99d1ff;
}

.tool.text {
  width: auto;
  gap: 3px;
  padding-left: 7px;
  white-space: nowrap;
}

.dots {
  flex: none;
  width: 6px;
  height: 14px;
  background: radial-gradient(circle, #b5ad9f 1px, transparent 2px) 0 0 / 6px 4px;
}

.sep {
  flex: none;
  width: 1px;
  height: 18px;
  margin: 0 2px 0 3px;
  background: #777;
}

.caret {
  flex: none;
  width: 14px;
  height: 4px;
  background: #222;
  clip-path: polygon(3px 0, 11px 0, 7px 4px);
}

.caret.dim {
  background: #777;
}

.caret.wide {
  margin: 0 2px 0 12px;
}

.combo {
  position: relative;
  flex: none;
  height: 21px;
}

.combo select {
  width: 100%;
  height: 100%;
  appearance: none;
  border: 1px solid #a3a3a3;
  border-radius: 0;
  background: #fff;
}

.combo svg {
  position: absolute;
  right: 4px;
  top: 4px;
  width: 12px;
  height: 12px;
  color: #444;
}

.project {
  width: 190px;
  margin: 0 4px 0 8px;
}

.project select {
  padding: 1px 20px 1px 3px;
  color: #fff;
  background: linear-gradient(#0078d7, #0078d7) content-box, #fff;
}

.project select option {
  color: #000;
}

.group {
  position: relative;
  margin: 0 14px 0 5px;
  white-space: nowrap;
}

.errmark {
  position: absolute;
  left: -5px;
  top: -3px;
  width: 6px;
  height: 7px;
  border: 2px solid #d9404c;
  background: #fff;
}

.init {
  width: 197px;
}

.init select {
  padding: 0 4px;
  background: #f3f3f3;
}

.perspectives {
  display: flex;
  align-items: center;
  margin-left: auto;
  padding-right: 4px;
}

.perspectives .search {
  margin-right: 12px;
}

.perspectives .on, .tabtools .on {
  background: #bcdcf4;
  border-color: #90c8f6;
}

/* Workbench */
main {
  flex: 1;
  display: flex;
  gap: 4px;
}

.left {
  flex: 1;
  min-width: 0;
  display: flex;
  flex-direction: column;
  gap: 5px;
}

.top {
  display: flex;
  gap: 5px;
}

.right {
  width: 420px;
  display: flex;
  flex-direction: column;
  gap: 4px;
}

.strip {
  width: 23px;
  display: flex;
  flex-direction: column;
  align-items: center;
  padding-top: 2px;
  margin-left: -4px;
}

.strip .tool {
  margin-bottom: 1px;
}

.hdots {
  width: 14px;
  height: 3px;
  margin-bottom: 2px;
  background: radial-gradient(circle, #9d968a 1px, transparent 2px) 0 0 / 4px 3px;
}

.panel {
  min-width: 0;
  display: flex;
  flex-direction: column;
  border: 1px solid #d8d8d8;
}

.pins, .package {
  flex: 1;
}

.pins {
  background: #fff;
}

.tabs {
  display: flex;
  height: 24px;
  border-bottom: 1px solid #d8d8d8;
  background: linear-gradient(#e9e9e9, #e3e3e3);
}

.pins .tabs {
  background: #f0f0f0;
}

.tab {
  display: flex;
  align-items: center;
  gap: 4px;
  padding: 1px 6px 0 4px;
  white-space: nowrap;
}

.tab.active {
  height: 24px;
  padding-right: 7px;
  border-right: 1px solid #d8d8d8;
  background: #f0f0f0;
}

.tab.active.white {
  background: #fff;
}

.x {
  width: 11px;
  height: 11px;
  margin-left: 5px;
}

.tabtools {
  display: flex;
  align-items: center;
  margin-left: auto;
  padding-right: 4px;
}

.pintools {
  display: flex;
  align-items: center;
  padding: 5px 5px 6px;
}

.after {
  margin-left: 8px;
}

.filter {
  flex: 1;
  display: flex;
  align-items: center;
  height: 22px;
  margin-left: 3px;
  padding-left: 2px;
  border: 1px solid #7a7a7a;
  background: #fff;
}

.filter input {
  flex: 1;
  min-width: 0;
  border: 0;
  padding: 0;
  background: none;
  outline: 0;
}

::placeholder {
  color: #555;
  opacity: 1;
}

/* Data tables */
.grid {
  border-collapse: separate;
  border-spacing: 0;
  table-layout: fixed;
  width: 100%;
  background: #fff;
}

.grid th, .grid td {
  padding: 0 0 0 6px;
  border-right: 1px solid #ededed;
  overflow: hidden;
  white-space: nowrap;
  text-align: left;
  font-weight: normal;
}

.grid th {
  height: 24px;
  border-color: #dcdcdc;
}

.grid td {
  height: 19px;
  border-bottom: 1px solid #ededed;
  line-height: 18px;
}

.grid th:last-child, .grid td:last-child {
  border-right: 0;
}

.c41 { width: 41px; }
.c46 { width: 46px; }
.c49 { width: 49px; }
.c70 { width: 70px; }
.c71 { width: 71px; }
.c80 { width: 80px; }
.c85 { width: 85px; }
.c90 { width: 90px; }
.c100 { width: 100px; }
.c101 { width: 101px; }
.c104 { width: 104px; }
.c108 { width: 108px; }
.c109 { width: 109px; }
.c110 { width: 110px; }
.c113 { width: 113px; }
.c115 { width: 115px; }
.c125 { width: 125px; }
.c137 { width: 137px; }
.c200 { width: 200px; }

.pinsview {
  display: flex;
  padding: 0 5px;
}

.pintable td:nth-child(2) {
  color: #8a8a8a;
}

.pintable tr.fixed td:nth-child(2) {
  color: #222;
  background: #c8c8c8;
}

.pintable label {
  display: flex;
  align-items: center;
  gap: 2px;
}

.pintable td:first-child {
  padding-left: 4px;
}

.pintable input {
  width: 16px;
  height: 16px;
  appearance: none;
  border: 1px solid #a0a0a0;
  background: #f1f1f1;
}

.pintable input:checked::before, .check input::before {
  content: "";
  display: block;
  width: 10px;
  height: 5px;
  margin: 3px 0 0 2px;
  border: solid #9a9a9a;
  border-width: 0 0 2px 2px;
  transform: rotate(-48deg);
}

/* Scroll bars */
.vscroll, .hscroll {
  flex: none;
  display: flex;
  background: #f0f0f0;
  color: #555;
}

.vscroll {
  width: 15px;
  flex-direction: column;
  align-items: center;
}

.vscroll svg, .hscroll svg {
  width: 12px;
  height: 12px;
  margin: 3px;
}

.vscroll svg {
  margin: 3px 0 2px;
}

.hscroll {
  height: 16px;
  align-items: center;
}

.hscroll svg {
  margin: 0 3px 0 2px;
}

.vscroll .end {
  margin-top: auto;
}

.hscroll .end {
  margin-left: auto;
}

.thumb {
  background: #cdcdcd;
}

.vscroll .thumb {
  width: 15px;
}

.hscroll .thumb {
  height: 15px;
}

.t47 { height: 47px; }
.t307 { height: 307px; }
.w112 { width: 112px; }
.w139 { width: 139px; }
.w346 { width: 346px; }
.w1102 { width: 1102px; }

.inset {
  margin: 1px 5px 4px 145px;
}

.inset .end {
  margin-right: 20px;
}

.corner .end {
  margin-right: 18px;
}

/* Package drawing */
.canvas {
  flex: 1;
  display: flex;
  justify-content: space-between;
}

.canvas .vscroll {
  width: 16px;
  border-left: 1px solid #fff;
}

.canvas .grow {
  flex: 1;
  margin-bottom: 5px;
}

#chipview {
  margin: 0 auto;
  font-family: "Liberation Sans", sans-serif;
}

#chipview .lbl {
  font-size: 6px;
  text-anchor: middle;
  fill: #111;
}

#chipview .caption {
  font-size: 16px;
  text-anchor: middle;
}

/* Routing details */
.routing {
  flex: 1;
}

.routetools {
  display: flex;
  align-items: center;
  gap: 7px;
  padding: 4px 5px 3px 6px;
}

.routetools .filter {
  height: 25px;
  margin-left: 0;
}

.toggle {
  height: 23px;
  padding: 0 4px;
  border: 1px solid #0a5a9c;
  background: #cce4f7;
}

.routebox {
  flex: 1;
  display: flex;
  margin: 0 5px 3px;
  padding: 6px;
  border: 1px solid #a0a0a0;
  background: #fff;
}

.routeframe {
  flex: 1;
  min-width: 0;
  display: flex;
  flex-direction: column;
  border: 1px solid #bad0ea;
}

.routehead {
  display: flex;
  align-items: center;
  height: 26px;
  padding-left: 3px;
  background: #bad0ea;
}

.routehead label {
  width: 210px;
}

.routehead input {
  width: 37px;
  height: 22px;
  margin-right: 5px;
  border: 1px solid #7a7a7a;
  padding: 0;
  text-align: center;
}

.routehead button {
  width: 22px;
  height: 22px;
  margin-right: 5px;
  display: flex;
  align-items: center;
  justify-content: center;
  border: 1px solid #dfe8f2;
  outline: 1px solid #b0b0b0;
  outline-offset: -2px;
  color: #a9bacf;
}

.routehead svg {
  width: 18px;
  height: 18px;
}

.routehead button:disabled svg {
  width: 14px;
  height: 14px;
}

.routeclip {
  flex: 1 0 199px;
  height: 199px;
  overflow: hidden;
}

.routetable .sel {
  background: #0078d7;
  color: #111;
}

.routetable .dim {
  color: #999;
}

/* Overview */
.overview {
  background: #f0f0f0;
}

.ovbody {
  display: flex;
  height: 482px;
  background: #fff;
}

.cards {
  flex: 1;
  padding: 6px 1px 0 10px;
  overflow: hidden;
}

.card {
  margin-bottom: 2px;
  background: #f0f0f0;
}

.card h3 {
  display: flex;
  align-items: center;
  gap: 12px;
  height: 27px;
  padding-left: 8px;
  font-size: 11px;
}

.card h3 svg {
  width: 12px;
  height: 12px;
}

.hw {
  padding-bottom: 5px;
}

.hw dl {
  display: grid;
  grid-template-columns: 90px 1fr;
  column-gap: 8px;
  line-height: 20px;
}

.hw dt {
  text-align: right;
}

.spaced {
  margin-top: 10px;
}

.pinsinfo {
  display: flex;
  gap: 6px;
  padding: 4px 16px 8px 19px;
}

.bigicon {
  flex: none;
  width: 90px;
  height: 88px;
  padding: 3px 4px;
  border: 1px solid #adadad;
  background: #e1e1e1;
}

.pinsinfo p {
  line-height: 13px;
  height: 70px;
}

.status {
  display: flex;
  align-items: center;
  gap: 10px;
  margin-left: 3px;
}

.switch {
  appearance: none;
  width: 32px;
  height: 16px;
  padding: 2px 2px 2px 18px;
  border-radius: 8px;
  background: #00c400;
}

.switch::before {
  content: "";
  display: block;
  width: 12px;
  height: 12px;
  border-radius: 50%;
  background: #fff;
}

.gen {
  padding-bottom: 4px;
}

.check {
  display: flex;
  align-items: center;
  gap: 3px;
  height: 20px;
  padding-left: 18px;
}

.check input {
  appearance: none;
  width: 13px;
  height: 13px;
  border: 1px solid #333;
  background: #fff;
}

.check input::before {
  width: 8px;
  height: 4px;
  margin: 2px 0 0 1px;
  border-color: #333;
  border-width: 0 0 1px 1px;
}

.gen a {
  display: flex;
  align-items: center;
  gap: 12px;
  height: 27px;
  padding-left: 21px;
  color: #0066cc;
  text-decoration: none;
}

.rest {
  height: 20px;
}

/* Console and problems */
.console {
  height: 175px;
}

.console p {
  height: 17px;
  border-bottom: 1px solid #a0a0a0;
}

.problems {
  flex: 1;
}

.pfilter {
  height: 21px;
  margin: 6px 5px 5px;
  border: 1px solid #7a7a7a;
  padding: 0 5px;
}

.probview {
  flex: 1 0 154px;
  height: 154px;
  margin: 0 5px;
  overflow: hidden;
}

.probtable td {
  height: 18px;
  line-height: 17px;
  border-color: #dcdcdc;
}

.probtable td:first-child {
  background: #f7f7f7;
}

.probtable th {
  position: relative;
}

.sort {
  position: absolute;
  left: 46px;
  top: 1px;
  width: 8px;
  height: 5px;
}

.err {
  display: flex;
  align-items: center;
  gap: 6px;
  padding-left: 12px;
}

.problems .hscroll {
  margin: 1px 5px 4px;
}

footer {
  display: flex;
  justify-content: space-between;
  align-items: center;
  height: 27px;
  padding: 0 280px 6px 2px;
}

/* Notification */
.popup {
  position: fixed;
  right: 17px;
  bottom: 18px;
  width: 252px;
  border: 1px solid #999;
  background: #fff;
  box-shadow: 2px 3px 8px rgba(0,0,0,0.35);
}

.popuphead {
  display: flex;
  align-items: center;
  justify-content: space-between;
  height: 30px;
  padding: 4px 5px 0 0;
  border-bottom: 1px solid #999;
  white-space: nowrap;
}

.popuphead svg {
  width: 14px;
  height: 14px;
}

.popupbody {
  display: flex;
  align-items: center;
  gap: 11px;
  padding: 13px 13px 12px;
}

.popupbody svg {
  width: 60px;
  height: 60px;
}
```
FILE: script.js
```js
// pin, name, SIUL2, eMIOS instance, FXIO, LPUART
const pins = [
  ['A1', 'PTG10', 'gpio,202[...]', '', '', ''],
  ['B1', 'PTA18', 'gpio,18[...]', '1', '', '1:lpuart1...'],
  ['C1', 'PTA19', 'gpio,19[...]', '1', '', '1:lpuart1...'],
  ['D1', 'PTA21', 'gpio,21[...]', '1', 'd0', ''],
  ['E1', 'PTE11', 'gpio,139[...]', '0', 'd5', '4:lpuart4...'],
  ['F1', 'PTE13', 'gpio,141[...]', '1', 'd5', ''],
  ['G1', 'PTA24', 'gpi,24', '1', 'd3_i', ''],
  ['H1', 'PTA25', 'gpi,25[...]', '1', 'd2_i', ''],
  ['J1', 'VSS274'],
  ['K1', 'EXTAL'],
  ['L1', 'XTAL'],
  ['M1', 'PTE12', 'gpio,140[...]', '1', 'd8[...]', '2:lpuart2...'],
  ['N1', 'PTE3', 'gpio,131[...]', '0', 'd6', '2:lpuart2...'],
  ['P1', 'PTA31', 'gpio,31', '1', 'd0', ''],
  ['R1', 'PTB18', 'gpio,50', '1', 'd1', '13:lpuart...'],
  ['T1', 'PTB20', 'gpio,52', '1', 'd3', '14:lpuart...'],
  ['U1', 'PTB21', 'gpio,53[...]', '1', 'd4', '14:lpuart...'],
  ['A2', 'PTA8', 'gpio,8[...]', '1', 'd6', '2:lpuart2...'],
  ['B2', 'VSS267'],
  ['C2', 'PTE16', 'gpio,144[...]', '0', 'd3', '3:lpuart3...'],
  ['D2', 'PTE15', 'gpio,143[...]', '0', 'd2', '3:lpuart3...'],
  ['E2', 'PTE10', 'gpio,138[...]', '0', 'd4', '4:lpuart4...'],
  ['F2', 'PTE5', 'gpio,133[...]', '1', 'd7', '12:lpuart...'],
  ['G2', 'PTG9', 'gpio,201[...]', '', '', ''],
  ['H2', 'PTG1', 'gpio,193[...]', '1', '', '13:lpuart...'],
  ['J2', 'PTG0', 'gpio,192[...]', '1', '', '13:lpuart...'],
  ['K2', 'PTG3', 'gpio,195[...]', '1', '', '14:lpuart...']
];

document.getElementById('pinrows').innerHTML = pins.map(([pin, name, siul, emios, fxio, uart]) => {
  const fixed = siul === undefined;
  return `<tr class="${fixed ? 'fixed' : ''}">
    <td><label><input type="checkbox" disabled ${fixed ? 'checked' : ''}>${pin}</label></td>
    <td>${name}</td><td></td><td></td>
    <td>${siul ? 'SIUL2:' + siul : ''}</td>
    <td>${emios ? 'eMIOS_' + emios + ':emios_...' : ''}</td>
    <td>${fxio ? 'FXIO:fxio_' + fxio : ''}</td>
    <td>${uart ? 'LPUART' + uart : ''}</td></tr>`;
}).join('');

// empty rows below the data
function addEmptyRows(id, rows, cols) {
  document.getElementById(id).insertAdjacentHTML('beforeend', ('<tr>' + '<td></td>'.repeat(cols) + '</tr>').repeat(rows));
}
addEmptyRows('routerows', 9, 17);
addEmptyRows('problemrows', 8, 3);

// BGA package, seen from the bottom
const letters = 'ABCDEFGHJKLMNPRTU';
const dedicated = {
  B: [16, 2], D: [14, 9, 4], E: [13, 9, 5], G: [11, 10, 7],
  H: [13, 10, 9, 8, 7, 6], J: [14, 13, 10, 9, 8, 7, 6, 5, 4, 1],
  K: [11, 10, 9, 8, 5, 1], L: [11, 8, 7, 5, 1], M: [5],
  N: [10, 9, 8, 7, 6, 5, 4], P: [14, 4], R: [10, 7], T: [16, 10, 7, 2]
};
const pitch = 377 / 16;
let out = '<path d="M150.500 89.500h415l3 3v415l-3 3h-415l-3-3v-415z" fill="#7f7f7f" stroke="#666"/>' +
  '<path d="M147.500 507v-414l3-3.500h415" fill="none" stroke="#b8b8b8"/>' +
  '<circle cx="560" cy="98" r="5" fill="#009999" stroke="#5b6b6b"/>';

for (let i = 0; i < 17; i++) {
  const x = 168 + Math.round(i * pitch);
  const y = 110 + Math.round(i * pitch);
  const num = 17 - i;
  out += `<text class="lbl" x="${x}" y="42">${num}</text><text class="lbl" x="${x}" y="561">${num}</text>`;
  out += `<path d="M${x}.5 58v16M${x}.5 526v16M116 ${y}.5h16M584 ${y}.5h16" stroke="#000"/>`;
  out += `<text class="lbl" x="98" y="${y}">${letters[i]}</text><text class="lbl" x="617" y="${y}">${letters[i]}</text>`;
  for (let j = 0; j < 17; j++) {
    const row = letters[j];
    const py = 110 + Math.round(j * pitch);
    let fill = (dedicated[row] || []).includes(num) ? '#c6c6c6' : '#dfdfdf';
    if (row === 'A' && num === 13) fill = '#00ff00';
    out += `<rect x="${x - 4}" y="${py - 4}" width="8" height="8" fill="${fill}"/>`;
    out += `<text class="lbl" x="${x}" y="${py + 10}">${row}${num}</text>`;
  }
}
out += '<text class="caption" x="357" y="579">S32K358_289BGA - BGA 289 package</text>';
document.getElementById('chipview').innerHTML = out;
```
